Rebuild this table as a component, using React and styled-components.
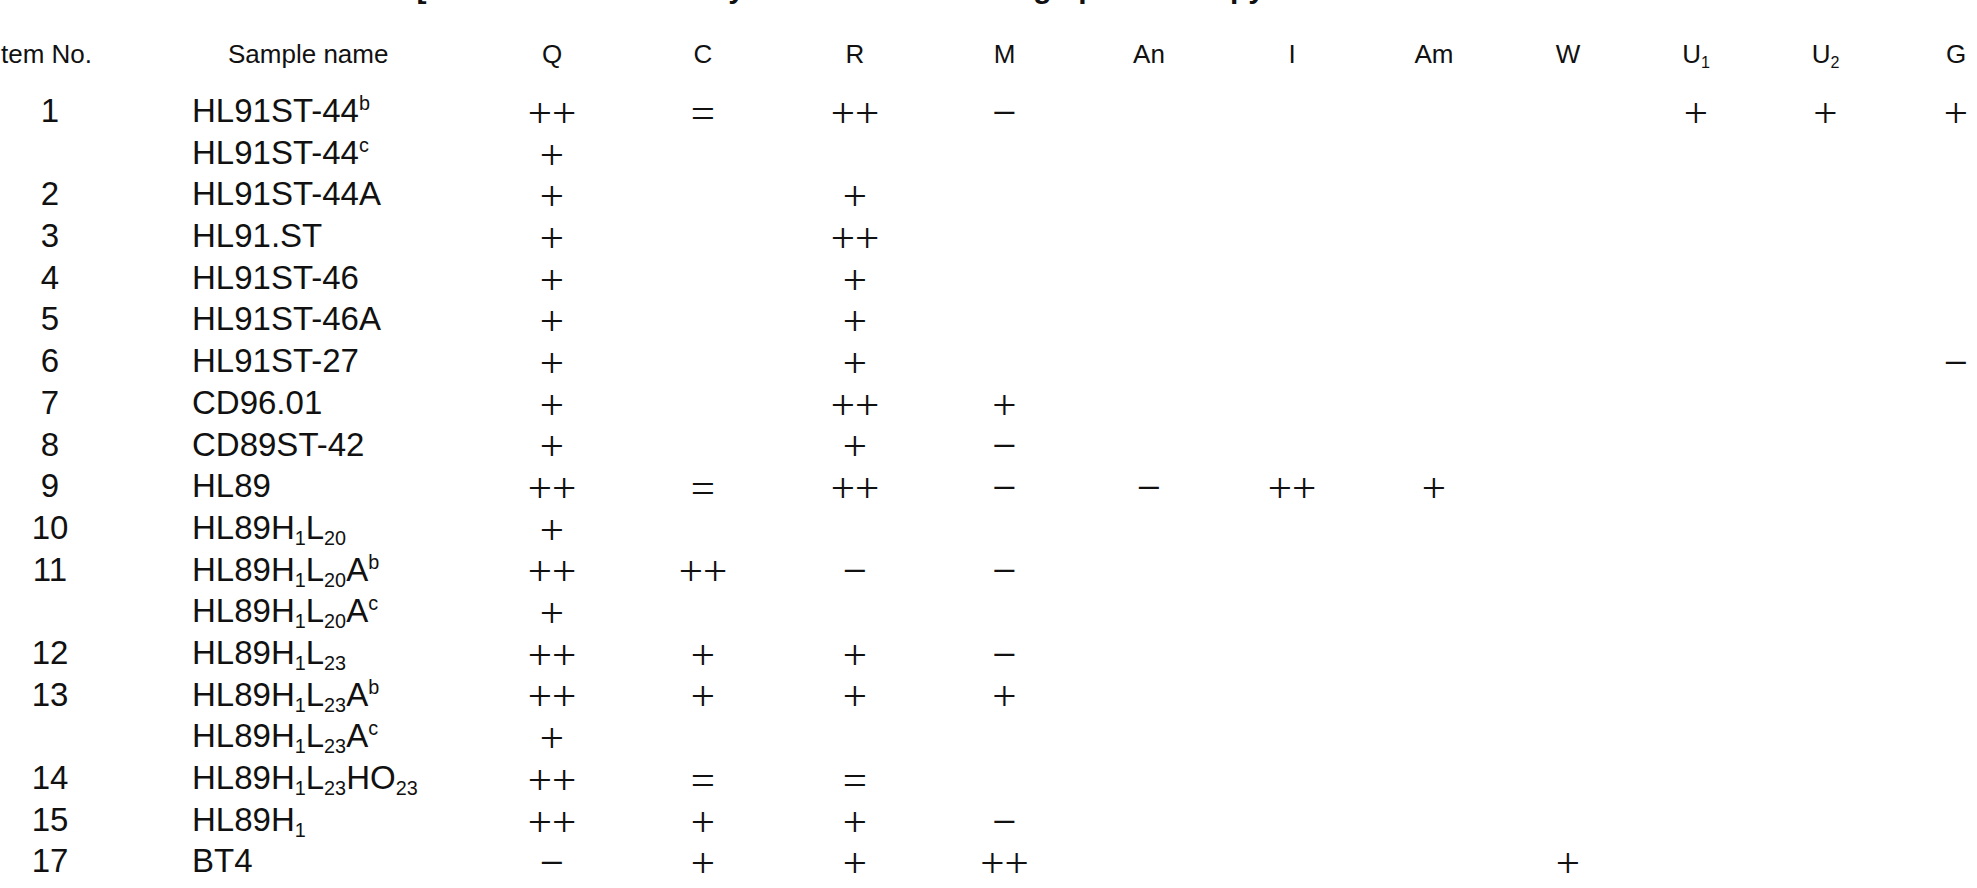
import React from "react";
import styled, { createGlobalStyle } from "styled-components";

const GlobalStyle = createGlobalStyle`
  html, body {
    margin: 0;
    padding: 0;
    background: #fff;
    overflow: hidden;
  }
  body {
    font-family: "Liberation Sans", Arial, sans-serif;
    color: #111;
  }
`;

// column widths, first column starts a little left of the page edge
const COLUMNS = "120px 369px 150px 152px 152px 147px 142px 144px 140px 128px 128px 131px 130px";

const Page = styled.div`
  width: 2040px;
  margin-left: -12px;
`;

// only the descenders of the caption above the table are on the page
const TitleClip = styled.div`
  height: 6px;
  overflow: hidden;
`;

const Title = styled.div`
  margin-top: -30px;
  padding-left: 29px;
  height: 36px;
  line-height: 36px;
  font-size: 30px;
  font-weight: 700;
  white-space: nowrap;
`;

const HeaderRow = styled.div`
  display: grid;
  grid-template-columns: ${COLUMNS};
  align-items: center;
  height: 42px;
  margin-top: 27px;
  margin-bottom: 15px;
  font-size: 26px;
`;

const HeaderCell = styled.div`
  text-align: ${(p) => p.$align || "center"};
  padding-left: ${(p) => (p.$align === "left" ? "120px" : "0")};
  padding-right: ${(p) => (p.$align === "right" ? "16px" : "0")};
  white-space: nowrap;

  sub {
    font-size: 0.62em;
    vertical-align: -0.3em;
    line-height: 0;
  }
`;

const Row = styled.div`
  display: grid;
  grid-template-columns: ${COLUMNS};
  align-items: center;
  height: 41.7px;
  line-height: 41.7px;
`;

const ItemCell = styled.div`
  text-align: center;
  padding-left: 4px;
  font-size: 33px;
`;

const NameCell = styled.div`
  padding-left: 84px;
  font-size: 33px;
  white-space: nowrap;

  sub {
    font-size: 0.6em;
    vertical-align: -0.28em;
    line-height: 0;
  }
  sup {
    font-size: 0.6em;
    vertical-align: 0.62em;
    line-height: 0;
  }
`;

const SignCell = styled.div`
  text-align: center;
  font-family: "Liberation Serif", "Times New Roman", serif;
  font-size: 43px;
  line-height: 30px;
  white-space: nowrap;
  position: relative;
  top: 2px;
`;

const Sub = ({ children }) => <sub>{children}</sub>;
const Sup = ({ children }) => <sup>{children}</sup>;

const headers = [
  "Item No.",
  "Sample name",
  "Q",
  "C",
  "R",
  "M",
  "An",
  "I",
  "Am",
  "W",
  <>U<Sub>1</Sub></>,
  <>U<Sub>2</Sub></>,
  "G",
];

const alignOf = (i) => (i === 0 ? "right" : i === 1 ? "left" : "center");

const H1L = (n) => (
  <>
    HL89H<Sub>1</Sub>L<Sub>{n}</Sub>
  </>
);

// signs: Q C R M An I Am W U1 U2 G
const rows = [
  { no: "1", name: <>HL91ST-44<Sup>b</Sup></>, s: ["++", "=", "++", "−", "", "", "", "", "+", "+", "+"] },
  { no: "", name: <>HL91ST-44<Sup>c</Sup></>, s: ["+"] },
  { no: "2", name: "HL91ST-44A", s: ["+", "", "+"] },
  { no: "3", name: "HL91.ST", s: ["+", "", "++"] },
  { no: "4", name: "HL91ST-46", s: ["+", "", "+"] },
  { no: "5", name: "HL91ST-46A", s: ["+", "", "+"] },
  { no: "6", name: "HL91ST-27", s: ["+", "", "+", "", "", "", "", "", "", "", "−"] },
  { no: "7", name: "CD96.01", s: ["+", "", "++", "+"] },
  { no: "8", name: "CD89ST-42", s: ["+", "", "+", "−"] },
  { no: "9", name: "HL89", s: ["++", "=", "++", "−", "−", "++", "+"] },
  { no: "10", name: H1L("20"), s: ["+"] },
  { no: "11", name: <>{H1L("20")}A<Sup>b</Sup></>, s: ["++", "++", "−", "−"] },
  { no: "", name: <>{H1L("20")}A<Sup>c</Sup></>, s: ["+"] },
  { no: "12", name: H1L("23"), s: ["++", "+", "+", "−"] },
  { no: "13", name: <>{H1L("23")}A<Sup>b</Sup></>, s: ["++", "+", "+", "+"] },
  { no: "", name: <>{H1L("23")}A<Sup>c</Sup></>, s: ["+"] },
  { no: "14", name: <>{H1L("23")}HO<Sub>23</Sub></>, s: ["++", "=", "="] },
  { no: "15", name: <>HL89H<Sub>1</Sub></>, s: ["++", "+", "+", "−"] },
  { no: "17", name: "BT4", s: ["−", "+", "+", "++", "", "", "", "+"] },
];

const App = () => {
  return (
    <Page>
      <GlobalStyle />
      <TitleClip>
        <Title>
          Table 1 Relative abundance [all mineral content: by diffractions counting up to the copy
        </Title>
      </TitleClip>
      <HeaderRow>
        {headers.map((h, i) => (
          <HeaderCell key={i} $align={alignOf(i)}>
            {h}
          </HeaderCell>
        ))}
      </HeaderRow>
      {rows.map((r, i) => (
        <Row key={i}>
          <ItemCell>{r.no}</ItemCell>
          <NameCell>{r.name}</NameCell>
          {Array.from({ length: 11 }).map((_, j) => (
            <SignCell key={j}>{r.s[j] || ""}</SignCell>
          ))}
        </Row>
      ))}
    </Page>
  );
};

export default App;
